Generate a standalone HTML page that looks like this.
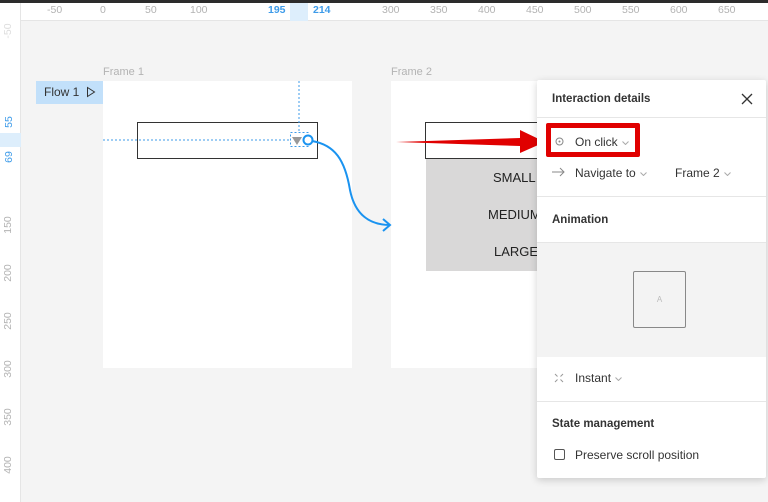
<!DOCTYPE html>
<html><head><style>
*{margin:0;padding:0;box-sizing:border-box}
body{width:768px;height:502px;overflow:hidden;background:#f4f4f4;font-family:"Liberation Sans",sans-serif;position:relative}
.a{position:absolute}
.rt{font-size:10.5px;color:#b3b3b3}
.rl{font-size:10.5px;color:#b3b3b3;transform:rotate(-90deg);transform-origin:center}
.p{font-size:12px;color:#333}
.h{font-size:11.5px;font-weight:bold;color:#333}
.sep{position:absolute;left:0;right:0;height:1px;background:#e6e6e6}
.cv{display:inline-block;width:7px;height:4px;margin-left:4px;vertical-align:middle}
</style></head><body>
<div class="a" style="left:0;top:0;width:768px;height:3px;background:#2c2c2c"></div>
<div class="a" style="left:0;top:3px;width:768px;height:18px;background:#fff;border-bottom:1px solid #e5e5e5"></div>
<div class="a" style="left:0;top:3px;width:21px;height:499px;background:#fff;border-right:1px solid #e5e5e5"></div>
<div class="a" style="left:290px;top:3px;width:18px;height:18px;background:#ddeefc"></div>
<div class="a" style="left:0;top:133px;width:21px;height:14px;background:#ddeefc"></div>
<div class="a rt" style="left:47px;top:4px">-50</div>
<div class="a rt" style="left:100px;top:4px">0</div>
<div class="a rt" style="left:145px;top:4px">50</div>
<div class="a rt" style="left:190px;top:4px">100</div>
<div class="a rt" style="left:268px;top:4px;color:#3d9be9;font-weight:bold">195</div>
<div class="a rt" style="left:313px;top:4px;color:#3d9be9;font-weight:bold">214</div>
<div class="a rt" style="left:382px;top:4px">300</div>
<div class="a rt" style="left:430px;top:4px">350</div>
<div class="a rt" style="left:478px;top:4px">400</div>
<div class="a rt" style="left:526px;top:4px">450</div>
<div class="a rt" style="left:574px;top:4px">500</div>
<div class="a rt" style="left:622px;top:4px">550</div>
<div class="a rt" style="left:670px;top:4px">600</div>
<div class="a rt" style="left:718px;top:4px">650</div>
<div class="a rl" style="left:-2px;top:25px;width:20px;text-align:center;color:#ddd">-50</div>
<div class="a rl" style="left:-1px;top:116px;width:20px;text-align:center;color:#3d9be9">55</div>
<div class="a rl" style="left:-1px;top:151px;width:20px;text-align:center;color:#3d9be9">69</div>
<div class="a rl" style="left:-2px;top:219px;width:20px;text-align:center">150</div>
<div class="a rl" style="left:-2px;top:267px;width:20px;text-align:center">200</div>
<div class="a rl" style="left:-2px;top:315px;width:20px;text-align:center">250</div>
<div class="a rl" style="left:-2px;top:363px;width:20px;text-align:center">300</div>
<div class="a rl" style="left:-2px;top:411px;width:20px;text-align:center">350</div>
<div class="a rl" style="left:-2px;top:459px;width:20px;text-align:center">400</div>

<div class="a" style="left:103px;top:66px;font-size:11px;color:#b3b3b3">Frame 1</div>
<div class="a" style="left:391px;top:66px;font-size:11px;color:#b3b3b3">Frame 2</div>
<div class="a" style="left:103px;top:81px;width:249px;height:287px;background:#fff"></div>
<div class="a" style="left:391px;top:81px;width:160px;height:287px;background:#fff"></div>
<div class="a" style="left:36px;top:81px;width:67px;height:23px;background:#c2e0fa"></div>
<div class="a" style="left:44px;top:85px;font-size:12px;color:#333">Flow 1</div>
<svg class="a" style="left:86px;top:86px" width="10" height="12"><path d="M1.5 1.5L8.5 6L1.5 10.5Z" fill="none" stroke="#333"/></svg>
<div class="a" style="left:137px;top:122px;width:181px;height:37px;border:1px solid #333"></div>
<div class="a" style="left:425px;top:122px;width:120px;height:37px;border:1px solid #333;border-right:none;background:#fff"></div>
<div class="a" style="left:426px;top:159px;width:120px;height:112px;background:#d9d8d8"></div>
<div class="a" style="left:493px;top:170px;font-size:13px;color:#222">SMALL</div>
<div class="a" style="left:488px;top:207px;font-size:13px;color:#222">MEDIUM</div>
<div class="a" style="left:494px;top:244px;font-size:13px;color:#222">LARGE</div>
<svg class="a" style="left:0;top:0" width="768" height="502">
<path d="M299 81V132M103 140H290" stroke="#3d9be9" stroke-dasharray="2 2" fill="none"/>
<rect x="290.5" y="132.5" width="18" height="14" fill="none" stroke="#3d9be9" stroke-dasharray="2 2"/>
<path d="M292 137H302L297 145Z" fill="#999"/>
<circle cx="308" cy="140" r="4.5" fill="#fff" stroke="#1a93f0" stroke-width="2"/>
<path d="M312 141C335 145 345 160 350 190C355 215 370 225 390 225" stroke="#1a93f0" stroke-width="2" fill="none"/>
<path d="M383 219L390 225L383 231" stroke="#1a93f0" stroke-width="2" fill="none"/>
<path d="M396 142L520 138V130L545 142L520 153V146Z" fill="#e00000"/>
</svg>

<div class="a" style="left:537px;top:80px;width:229px;height:398px;background:#fff;box-shadow:0 2px 8px rgba(0,0,0,.18);border-radius:2px">
<div class="a h" style="left:15px;top:13px">Interaction details</div>
<svg class="a" style="left:204px;top:13px" width="12" height="12"><path d="M1 1L11 11M11 1L1 11" stroke="#333" stroke-width="1.3"/></svg>
<div class="sep" style="top:37px"></div>
<div class="a" style="left:9px;top:43px;width:94px;height:34px;border:5px solid #e00000;border-radius:2px"></div>
<svg class="a" style="left:18px;top:57px" width="9" height="9"><circle cx="4.5" cy="4.5" r="3.5" fill="none" stroke="#888"/><circle cx="4.5" cy="4.5" r="1" fill="#888"/></svg>
<div class="a p" style="left:38px;top:55px">On click<svg class="cv" viewBox="0 0 7 4"><path d="M0.5 0.5L3.5 3.5L6.5 0.5" fill="none" stroke="#aaa"/></svg></div>
<svg class="a" style="left:15px;top:87px" width="14" height="10"><path d="M0 5H12M8 1L12 5L8 9" stroke="#888" fill="none"/></svg>
<div class="a p" style="left:38px;top:86px">Navigate to<svg class="cv" viewBox="0 0 7 4"><path d="M0.5 0.5L3.5 3.5L6.5 0.5" fill="none" stroke="#aaa"/></svg></div>
<div class="a p" style="left:138px;top:86px">Frame 2<svg class="cv" viewBox="0 0 7 4"><path d="M0.5 0.5L3.5 3.5L6.5 0.5" fill="none" stroke="#aaa"/></svg></div>
<div class="sep" style="top:116px"></div>
<div class="a h" style="left:15px;top:134px">Animation</div>
<div class="a" style="left:0;top:162px;width:229px;height:115px;background:#f3f3f3;border-top:1px solid #e6e6e6"></div>
<div class="a" style="left:96px;top:191px;width:53px;height:57px;border:1px solid #888;border-radius:2px;background:#f3f3f3;font-size:8px;color:#bbb;text-align:center;line-height:55px">A</div>
<svg class="a" style="left:17px;top:293px" width="10" height="10"><path d="M1 1L3.5 3.5M9 1L6.5 3.5M1 9L3.5 6.5M9 9L6.5 6.5" stroke="#999"/></svg>
<div class="a p" style="left:38px;top:291px">Instant<svg class="cv" viewBox="0 0 7 4"><path d="M0.5 0.5L3.5 3.5L6.5 0.5" fill="none" stroke="#aaa"/></svg></div>
<div class="sep" style="top:321px"></div>
<div class="a h" style="left:15px;top:338px">State management</div>
<div class="a" style="left:17px;top:369px;width:11px;height:11px;border:1px solid #555;border-radius:2px"></div>
<div class="a p" style="left:38px;top:368px">Preserve scroll position</div>
</div>
</body></html>
